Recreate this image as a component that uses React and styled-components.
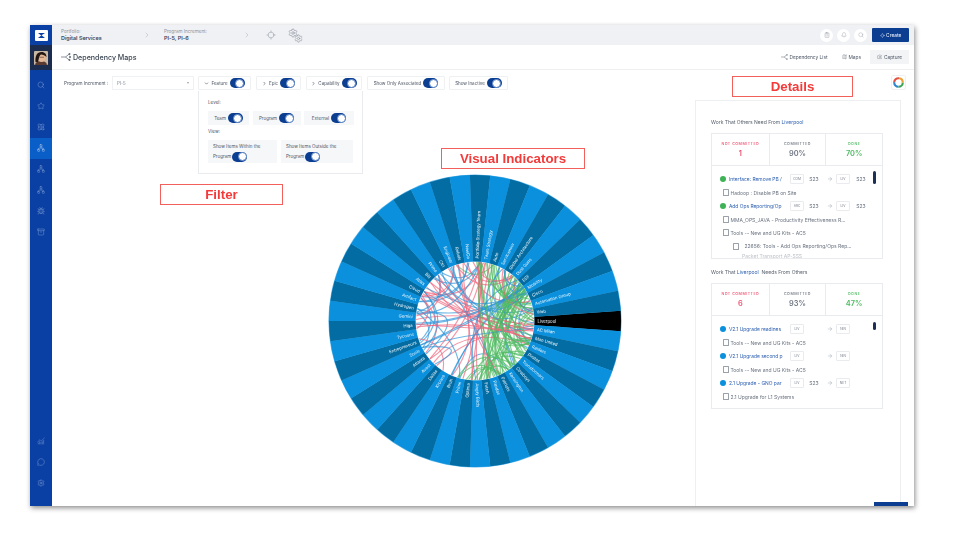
import React from 'react';
import styled, { createGlobalStyle } from 'styled-components';
import { Search, Star, Atom, Network, Bug, Archive, ChartNoAxesCombined, MessageCircle, Settings, ClipboardList, Bell, Locate, ChevronRight, ChevronDown, ArrowRight, Camera, Map as MapIcon } from 'lucide-react';

const Global = createGlobalStyle`
  html, body { margin: 0; padding: 0; background: #fff; overflow: hidden; }
  body { font-family: Inter, "Liberation Sans", sans-serif; color: #3d4654; }
`;
const Page = styled.div`
  position: relative; width: 960px; height: 540px; box-sizing: border-box; padding: 25px 0 0 30px;
`;
const Window = styled.div`
  position: relative; width: 884px; height: 481px; display: flex; overflow: hidden; background: #fff;
  box-shadow: 1px 2px 5px rgba(0,0,0,.45); filter: blur(.35px);
`;
const Sidebar = styled.nav`
  width: 22px; flex: none; background: #0a3fa3; display: flex; flex-direction: column; color: #7f9fd6;
`;
const LogoCell = styled.div`height: 20px; display: flex; align-items: center; justify-content: center;`;
const AvatarCell = styled.div`height: 25px; background: #1b2c4e; display: flex; align-items: center; justify-content: center; margin-bottom: 4.5px;`;
const NavItem = styled.div`
  height: 21px; flex: none; display: flex; align-items: center; justify-content: center;
  background: ${p => p.$active ? '#0a5ec8' : 'transparent'}; color: ${p => p.$active ? '#b9d2f3' : '#7f9fd6'};
`;
const NavBottom = styled.div`margin-top: auto; padding-bottom: 12.5px;`;
const Main = styled.div`flex: 1; min-width: 0; display: flex; flex-direction: column;`;
const TopBar = styled.header`height: 20px; flex: none; background: #f0f1f5; display: flex; align-items: center; padding: 0 5px 0 9px;`;
const Crumb = styled.div`width: ${p => p.$w}px; display: flex; flex-direction: column; gap: 1.5px;`;
const CrumbLabel = styled.span`font-size: 4.6px; color: #8a919c;`;
const CrumbValue = styled.span`font-size: 5.4px; font-weight: 600; color: #3c4656;`;
const ChevronBox = styled.span`width: 8px; margin-right: ${p => p.$mr}px; color: #9aa1ab; display: flex;`;
const GhostIcon = styled.span`color: #8d949e; display: flex; margin-right: ${p => p.$mr}px;`;
const GearStack = styled.span`position: relative; width: 15px; height: 15px; color: #8d949e; display: flex;`;
const GearSmall = styled.span`position: absolute; right: 0; bottom: 0; display: flex;`;
const TopRight = styled.div`margin-left: auto; display: flex; align-items: center; gap: 4px;`;
const Round = styled.span`width: 13px; height: 13px; border-radius: 50%; background: #fff; color: #8d949e; display: flex; align-items: center; justify-content: center;`;
const CreateBtn = styled.button`
  width: 37px; height: 14px; margin-left: 1px; border: 0; padding: 0; border-radius: 1px; background: #0b3d91; color: #dfe8f6;
  font: 500 4.8px Inter, sans-serif; display: flex; align-items: center; justify-content: center; gap: 1.5px;
`;
const HeaderRow = styled.div`height: 24px; flex: none; border-bottom: 1px solid #eef0f2; display: flex; align-items: center; padding: 0 5px 0 9px;`;
const PageTitle = styled.h1`margin: 0; font-size: 7.1px; font-weight: 500; color: #3a4452; display: flex; align-items: center; gap: 2px;`;
const HeaderActions = styled.div`margin-left: auto; display: flex; align-items: center;`;
const HeaderLink = styled.span`font-size: 4.8px; color: #4c5563; display: flex; align-items: center; gap: 1.5px; margin-right: ${p => p.$mr}px;`;
const CaptureBtn = styled.span`width: 39px; height: 14px; background: #f3f4f6; font-size: 4.8px; color: #4c5563; display: flex; align-items: center; justify-content: center; gap: 1.5px;`;
const Content = styled.div`flex: 1; min-height: 0; display: flex;`;
const LeftArea = styled.section`flex: 1; min-width: 0; padding: 6px 0 0 12px;`;
const FilterRow = styled.div`display: flex; align-items: center; height: 14px;`;
const FilterLabel = styled.span`font-size: 4.6px; color: #4c5563; width: 48px; flex: none; white-space: nowrap;`;
const SelectBox = styled.div`
  width: 82px; height: 14px; box-sizing: border-box; border: 1px solid #f0f1f3; font-size: 4.4px; color: #7b838f; padding: 0 4px;
  display: flex; align-items: center; justify-content: space-between; margin-right: 4px;
`;
const Caret = styled.span`width: 0; height: 0; border-left: 1.5px solid transparent; border-right: 1.5px solid transparent; border-top: 2px solid #9aa1ab;`;
const FilterItem = styled.div`position: relative; margin-right: ${p => p.$mr}px; flex: none;`;
const Chip = styled.div`
  width: ${p => p.$w}px; height: 14px; box-sizing: border-box; border: 1px solid #eff0f2; border-radius: 1px;
  display: flex; align-items: center; justify-content: center; gap: 2px; font-size: 4.5px; color: #4c5563; white-space: nowrap;
`;
const ToggleTrack = styled.span`
  display: inline-block; position: relative; width: 15px; height: 10px; border-radius: 5px; background: #0b3d91; flex: none; vertical-align: middle;
`;
const ToggleKnob = styled.span`
  position: absolute; right: .5px; top: .5px; width: 9px; height: 9px; box-sizing: border-box; border-radius: 50%; background: #fff; border: 1px solid #5a84c8;
`;
const Toggle = () => <ToggleTrack><ToggleKnob /></ToggleTrack>;
const Dropdown = styled.div`
  position: absolute; left: 0; top: 15px; width: 165px; height: 83px; box-sizing: border-box; background: #fff;
  border: 1px solid #e9ebee; border-top: 0; padding: 9px 8px 0 9px; z-index: 2;
`;
const DropLabel = styled.div`font-size: 4.6px; color: #4c5563; height: 6px; line-height: 6px;`;
const DropRow = styled.div`display: flex; gap: ${p => p.$gap}px; margin: 5px 0 4px;`;
const LevelChip = styled.div`
  width: ${p => p.$w}px; height: 14px; background: #f6f7f9; display: flex; align-items: center; justify-content: center; gap: 2px; font-size: 4.5px; color: #4c5563;
`;
const ViewChip = styled.div`
  width: ${p => p.$w}px; height: 23px; box-sizing: border-box; background: #f6f7f9; padding: 3px 5px; font-size: 4.5px; line-height: 8.5px; color: #4c5563;
`;
const ChordWrap = styled.div`width: 294px; height: 294px; margin: 84px 0 0 264px;`;
const ChordSvg = styled.svg`display: block; overflow: visible;`;
const Seg = styled.path`fill: ${p => p.$c};`;
const Label = styled.text`font-family: Inter, sans-serif; font-size: 4.3px; fill: #eaf5fc;`;
const Chord = styled.path`fill: none; stroke: ${p => p.$c}; stroke-width: 1.15; opacity: .68;`;
const DetailsCol = styled.aside`width: 206px; flex: none; margin-right: 13px; padding-top: 5px; display: flex; flex-direction: column;`;
const DonutRow = styled.div`height: 15px; margin: 0 -5px 10px 0; display: flex; justify-content: flex-end;`;
const DonutBtn = styled.span`width: 15px; height: 15px; border: 1px solid #eef0f2; border-radius: 2px; box-sizing: border-box; display: flex; align-items: center; justify-content: center;`;
const Panel = styled.div`flex: 1; border: 1px solid #eeeff1; border-bottom: 0; padding: 16px 17px 0 15px; box-sizing: border-box;`;
const PanelTitle = styled.div`font-size: 5px; line-height: 10px; color: #59616d; margin: ${p => p.$mt}px 0 6px; white-space: pre;`;
const TeamLink = styled.span`color: #2a5db0;`;
const Box = styled.div`border: 1px solid #e9ebee; box-sizing: border-box; width: 172px;`;
const Stats = styled.div`height: 32px; display: grid; grid-template-columns: repeat(3, 1fr); border-bottom: 1px solid #e9ebee; box-sizing: border-box;`;
const Stat = styled.div`
  display: flex; flex-direction: column; align-items: center; padding-top: 7px; gap: 3px; box-sizing: border-box;
  & + & { border-left: 1px solid #e9ebee; }
`;
const StatLabel = styled.span`font-size: 3.7px; letter-spacing: .45px; font-weight: 500; color: ${p => p.$c};`;
const StatValue = styled.span`font-size: 7.4px; font-weight: 600; color: ${p => p.$c};`;
const ItemList = styled.div`position: relative; height: 92px; overflow: hidden; padding: 6px 0 0 8px; box-sizing: border-box;`;
const Thumb = styled.span`position: absolute; left: 161px; top: ${p => p.$t}px; width: 3px; height: ${p => p.$h}px; border-radius: 1.5px; background: #1d2f55;`;
const MainRow = styled.div`height: 14px; display: flex; align-items: center; font-size: 5px; color: #6b7380;`;
const Dot = styled.span`width: 6px; height: 6px; border-radius: 50%; background: ${p => p.$c}; flex: none; margin-right: 3px;`;
const ItemTitle = styled.span`width: 57px; flex: none; white-space: nowrap; font-size: 4.9px; color: #2a5db0; font-weight: 400; margin-right: 4px;`;
const Code = styled.span`
  width: 14px; height: 10px; flex: none; box-sizing: border-box; border: 1px solid #e9ebee; border-radius: 1px; font-size: 3.2px; color: #737b87;
  display: flex; align-items: center; justify-content: center;
`;
const Sprint = styled.span`width: ${p => p.$w}px; flex: none; text-align: center;`;
const ArrowBox = styled.span`width: 12px; flex: none; color: #8a919c; display: flex; justify-content: center;`;
const SubRow = styled.div`
  height: ${p => p.$h || 13}px; display: flex; align-items: center; gap: 1.5px; font-size: 5px; color: #6b7380; white-space: nowrap;
  padding-left: ${p => p.$indent || 3}px; opacity: ${p => p.$fade ? .45 : 1};
`;
const DocIcon = styled.span`width: 4px; height: 5px; flex: none; border: .7px solid #9aa1ab; border-radius: .6px; margin-right: ${p => p.$mr || 0}px;`;
const PeekButton = styled.span`position: absolute; left: 844px; bottom: 0; width: 34px; height: 4px; background: #0b3d91;`;
const Annotation = styled.div`
  position: absolute; left: ${p => p.$x}px; top: ${p => p.$y}px; width: ${p => p.$w}px; height: 21px; box-sizing: border-box; z-index: 5; background: #fff;
  border: 1.5px solid #f3605c; color: #f33b3a; font: 700 13.3px "Liberation Sans", Arial, sans-serif; display: flex; align-items: center; justify-content: center; filter: blur(.25px);
`;

const LABELS = ['Liverpool','AC Milan','Man United','Raiders','Pirates','Transformers','Cowboys','Kensington','Patriots','Pandas','Fetch','Angry Birds','Optima','Prime','Bruh','Kronos','Dallas','Avast','Atlanta','Sonic','Entrepreneurs','Tycoons','Higa','Gemini','Hydrogen','Artifact','Cloud','Atlas','Bill','Prime','Ctrl','Engineer','Rebels','NewCo','Portfolio Strategy Team','Team Strategy','Auto','Servicenow','Global Architecture','Dust Guns','ESF','Mobility','Cisco','Automation Group','Web'];
const STEP = 360 / 45;
const CX = 147, CY = 147, R0 = 59.5, R1 = 146;
const pt = (deg, r) => [CX + r * Math.cos(deg * Math.PI / 180), CY + r * Math.sin(deg * Math.PI / 180)];
const fmt = n => n.toFixed(2);
const wedge = i => {
  const a = (i - .5) * STEP, b = (i + .5) * STEP;
  const [x1, y1] = pt(a, R0), [x2, y2] = pt(a, R1), [x3, y3] = pt(b, R1), [x4, y4] = pt(b, R0);
  return `M${fmt(x1)} ${fmt(y1)}L${fmt(x2)} ${fmt(y2)}A${R1} ${R1} 0 0 1 ${fmt(x3)} ${fmt(y3)}L${fmt(x4)} ${fmt(y4)}A${R0} ${R0} 0 0 0 ${fmt(x1)} ${fmt(y1)}Z`;
};
function rng(seed) {
  return () => {
    seed |= 0; seed = seed + 0x6D2B79F5 | 0;
    let t = Math.imul(seed ^ seed >>> 15, 1 | seed);
    t = t + Math.imul(t ^ t >>> 7, 61 | t) ^ t;
    return ((t ^ t >>> 14) >>> 0) / 4294967296;
  };
}
function buildChords() {
  const r = rng(7), out = [];
  const range = (a, b) => (a + r() * (b - a)) * STEP;
  const long = (c, a0, a1, b0, b1, n, ox, oy, spread) => {
    for (let k = 0; k < n; k++) {
      const [x1, y1] = pt(range(a0, a1), 59), [x2, y2] = pt(range(b0, b1), 59);
      out.push({ c, d: `M${fmt(x1)} ${fmt(y1)}Q${fmt(CX + ox + (r() - .5) * spread)} ${fmt(CY + oy + (r() - .5) * spread)} ${fmt(x2)} ${fmt(y2)}` });
    }
  };
  const short = (c, a0, a1, n, span) => {
    for (let k = 0; k < n; k++) {
      const a = range(a0, a1), b = a + (span * .5 + r() * span) * STEP;
      const [x1, y1] = pt(a, 59), [x2, y2] = pt(b, 59), [qx, qy] = pt((a + b) / 2, 59 - Math.abs(b - a) * .6);
      out.push({ c, d: `M${fmt(x1)} ${fmt(y1)}Q${fmt(qx)} ${fmt(qy)} ${fmt(x2)} ${fmt(y2)}` });
    }
  };
  const BLUE = '#2b93d8', RED = '#f0647c', GREEN = '#4fbb62';
  long(BLUE, 0, 45, 0, 45, 20, 0, 0, 50);
  long(BLUE, 40, 41, 14, 24, 7, 0, 0, 4);
  short(BLUE, 17, 30, 9, 5);
  short(BLUE, 36, 44, 4, 4);
  long(RED, -1, 3, 16, 30, 12, 0, 6, 36);
  long(RED, 30, 36, 4, 18, 9, 0, 0, 30);
  short(RED, 24, 40, 9, 7);
  short(RED, 12, 24, 4, 5);
  long(GREEN, 33, 42, 2, 11, 30, 14, 16, 44);
  long(GREEN, 40, 41, 6, 13, 7, 8, 10, 12);
  short(GREEN, 30, 40, 12, 6);
  short(GREEN, 40, 45, 5, 5);
  short(GREEN, 2, 10, 12, 5);
  return out;
}
const CHORDS = buildChords().map((c, i) => ({ ...c, i })).sort((a, b) => ((a.i * 37) % 17) - ((b.i * 37) % 17));

function ChordDiagram() {
  return (
    <ChordSvg width="294" height="294" viewBox="0 0 294 294">
      <circle cx={CX} cy={CY} r={R1 + .6} fill="#5bb5ea" />
      <circle cx={CX} cy={CY} r={R0} fill="#fff" />
      {LABELS.map((_, i) => <Seg key={i} d={wedge(i)} $c={i === 0 ? '#000' : i % 2 ? '#0a90dc' : '#036ca2'} />)}
      {CHORDS.map(c => <Chord key={c.i} d={c.d} $c={c.c} />)}
      {LABELS.map((t, i) => {
        const a = i * STEP, left = a > 90 && a < 270;
        return (
          <Label key={i} transform={`translate(${CX} ${CY}) rotate(${left ? a + 180 : a}) translate(${left ? -62.5 : 62.5} 1.5)`} textAnchor={left ? 'end' : 'start'}>{t}</Label>
        );
      })}
    </ChordSvg>
  );
}

const Logo = () => (
  <svg width="13" height="11" viewBox="0 0 13 11"><path d="M1 0h11a1 1 0 0 1 1 1v9a1 1 0 0 1-1 1H1a1 1 0 0 1-1-1V1a1 1 0 0 1 1-1z" fill="#fff" /><path d="M3 3h7L6.5 5.2 10 8H3l3.2-2.6z" fill="#0a3fa3" /></svg>
);
const Avatar = () => (
  <svg width="14" height="14" viewBox="0 0 14 14">
    <rect width="14" height="14" rx="1" fill="#c9b7a4" />
    <path d="M1 14c.5-3 2.500-4 6-4s5.500 1 6 4z" fill="#5a3a30" />
    <ellipse cx="7.500" cy="6.500" rx="3.600" ry="4.500" fill="#e6b796" />
    <path d="M1.500 11C1 5 3 1 7.500 1c3.500 0 5 2.500 5 5-1.500-1.500-3.500-2.500-5.500-2.500C5 4.500 5 8 4 11z" fill="#241612" />
    <rect x="5.500" y="5.800" width="4.500" height=".8" fill="#3b2a24" opacity=".7" />
  </svg>
);
const MapGlyph = () => (
  <svg width="10" height="8" viewBox="0 0 10 8" fill="none" stroke="#5a6472" strokeWidth=".7"><path d="M0 4h4.500L8 1.200M4.500 4L8 6.800" /><circle cx="8.500" cy="1" r=".7" fill="#5a6472" /><circle cx="9" cy="4" r=".7" fill="#5a6472" /><circle cx="8.500" cy="7" r=".7" fill="#5a6472" /></svg>
);
const SmallMapGlyph = () => (
  <svg width="7" height="6" viewBox="0 0 10 8" fill="none" stroke="#6b7380" strokeWidth=".8"><path d="M0 4h4.500L8 1.200M4.500 4L8 6.800" /><circle cx="8.500" cy="1" r=".8" /><circle cx="8.500" cy="7" r=".8" /></svg>
);
const Donut = () => (
  <svg width="11" height="11" viewBox="0 0 36 36" fill="none" strokeWidth="7">
    <circle cx="18" cy="18" r="14" stroke="#3aa655" strokeDasharray="22 66" strokeDashoffset="0" />
    <circle cx="18" cy="18" r="14" stroke="#2a86d0" strokeDasharray="22 66" strokeDashoffset="-22" />
    <circle cx="18" cy="18" r="14" stroke="#e0503f" strokeDasharray="22 66" strokeDashoffset="-44" />
    <circle cx="18" cy="18" r="14" stroke="#f0a030" strokeDasharray="22 66" strokeDashoffset="-66" />
  </svg>
);

const SIDE = [Search, Star, Atom, Network, Network, Network, Bug, Archive];
const SIDE_BOTTOM = [ChartNoAxesCombined, MessageCircle, Settings];

const LIST_A = [
  { k: 'm', title: 'Interface: Remove PB /', from: 'COM', s1: 'S23', to: 'LIV', s2: 'S23', c: '#3fb257' },
  { k: 's', text: 'Hadoop : Disable PB on Site' },
  { k: 'm', title: 'Add Ops Reporting/Op', from: 'ARC', s1: 'S23', to: 'LIV', s2: 'S23', c: '#3fb257' },
  { k: 's', text: 'MMA_OPS_JAVA - Productivity Effectiveness R...' },
  { k: 's', text: 'Tools -- New and UG Kits - AC5' },
  { k: 'i', text: '22656: Tools - Add Ops Reporting/Ops Rep...' },
  { k: 'f', text: 'Packet Transport AP-SSS' },
];
const LIST_B = [
  { k: 'm', title: 'V2.1 Upgrade readines', from: 'LIV', to: 'NIN', c: '#0a90dc' },
  { k: 's', text: 'Tools -- New and UG Kits - AC5' },
  { k: 'm', title: 'V2.1 Upgrade second p', from: 'LIV', to: 'NIN', c: '#0a90dc' },
  { k: 's', text: 'Tools -- New and UG Kits - AC5' },
  { k: 'm', title: '2.1 Upgrade - GNO par', from: 'LIV', s1: 'S23', to: 'NET', c: '#0a90dc' },
  { k: 's', text: '2.1 Upgrade for L1 Systems' },
];

function Items({ rows }) {
  return rows.map((r, i) => {
    if (r.k === 'm') return (
      <MainRow key={i}>
        <Dot $c={r.c} />
        <ItemTitle>{r.title}</ItemTitle>
        <Code>{r.from}</Code>
        <Sprint $w={20}>{r.s1}</Sprint>
        <ArrowBox><ArrowRight size={6} strokeWidth={1.5} /></ArrowBox>
        <Code>{r.to}</Code>
        <Sprint $w={22}>{r.s2}</Sprint>
      </MainRow>
    );
    if (r.k === 'i') return <SubRow key={i} $h={14} $indent={13}><DocIcon $mr={4} />{r.text}</SubRow>;
    if (r.k === 'f') return <SubRow key={i} $h={6} $indent={22} $fade>{r.text}</SubRow>;
    return <SubRow key={i}><DocIcon />{r.text}</SubRow>;
  });
}

function Summary({ title, stats, rows, thumb }) {
  return (
    <>
      {title}
      <Box>
        <Stats>
          <Stat><StatLabel $c="#f0506e">NOT COMMITTED</StatLabel><StatValue $c="#f0506e">{stats[0]}</StatValue></Stat>
          <Stat><StatLabel $c="#6f7682">COMMITTED</StatLabel><StatValue $c="#6f7682">{stats[1]}</StatValue></Stat>
          <Stat><StatLabel $c="#4cbb5f">DONE</StatLabel><StatValue $c="#4cbb5f">{stats[2]}</StatValue></Stat>
        </Stats>
        <ItemList>
          <Items rows={rows} />
          <Thumb $t={thumb[0]} $h={thumb[1]} />
        </ItemList>
      </Box>
    </>
  );
}

export default function App() {
  return (
    <Page>
      <Global />
      <Window>
        <Sidebar>
          <LogoCell><Logo /></LogoCell>
          <AvatarCell><Avatar /></AvatarCell>
          {SIDE.map((I, i) => <NavItem key={i} $active={i === 3}><I size={8} strokeWidth={1.4} /></NavItem>)}
          <NavBottom>
            {SIDE_BOTTOM.map((I, i) => <NavItem key={i}><I size={8} strokeWidth={1.4} /></NavItem>)}
          </NavBottom>
        </Sidebar>
        <Main>
          <TopBar>
            <Crumb $w={82}><CrumbLabel>Portfolio:</CrumbLabel><CrumbValue>Digital Services</CrumbValue></Crumb>
            <ChevronBox $mr={13}><ChevronRight size={8} strokeWidth={1.2} /></ChevronBox>
            <Crumb $w={79}><CrumbLabel>Program Increment:</CrumbLabel><CrumbValue>PI-5, PI-6</CrumbValue></Crumb>
            <ChevronBox $mr={15}><ChevronRight size={8} strokeWidth={1.2} /></ChevronBox>
            <GhostIcon $mr={12}><Locate size={10} strokeWidth={1.2} /></GhostIcon>
            <GearStack><Settings size={10} strokeWidth={1.6} /><GearSmall><Settings size={9} strokeWidth={1.6} /></GearSmall></GearStack>
            <TopRight>
              <Round><ClipboardList size={6} strokeWidth={1.5} /></Round>
              <Round><Bell size={6} strokeWidth={1.4} /></Round>
              <Round><Search size={6} strokeWidth={1.4} /></Round>
              <CreateBtn><Locate size={5} strokeWidth={1.5} />Create</CreateBtn>
            </TopRight>
          </TopBar>
          <HeaderRow>
            <PageTitle><MapGlyph />Dependency Maps</PageTitle>
            <HeaderActions>
              <HeaderLink $mr={14}><SmallMapGlyph />Dependency List</HeaderLink>
              <HeaderLink $mr={9}><MapIcon size={5.500} strokeWidth={1.3} />Maps</HeaderLink>
              <CaptureBtn><Camera size={5.500} strokeWidth={1.3} />Capture</CaptureBtn>
            </HeaderActions>
          </HeaderRow>
          <Content>
            <LeftArea>
              <FilterRow>
                <FilterLabel>Program Increment :</FilterLabel>
                <SelectBox>PI-5<Caret /></SelectBox>
                <FilterItem $mr={5}>
                  <Chip $w={53}><ChevronDown size={5} strokeWidth={3} />Feature<Toggle /></Chip>
                  <Dropdown>
                    <DropLabel>Level:</DropLabel>
                    <DropRow $gap={3.500}>
                      <LevelChip $w={41}>Team<Toggle /></LevelChip>
                      <LevelChip $w={48}>Program<Toggle /></LevelChip>
                      <LevelChip $w={50}>External<Toggle /></LevelChip>
                    </DropRow>
                    <DropLabel>View:</DropLabel>
                    <DropRow $gap={4}>
                      <ViewChip $w={69}>Show Items Within the<br />Program <Toggle /></ViewChip>
                      <ViewChip $w={72}>Show Items Outside the<br />Program <Toggle /></ViewChip>
                    </DropRow>
                  </Dropdown>
                </FilterItem>
                <FilterItem $mr={5}><Chip $w={45}><ChevronRight size={5} strokeWidth={3} />Epic<Toggle /></Chip></FilterItem>
                <FilterItem $mr={5}><Chip $w={56}><ChevronRight size={5} strokeWidth={3} />Capability<Toggle /></Chip></FilterItem>
                <FilterItem $mr={4}><Chip $w={78}>Show Only Associated<Toggle /></Chip></FilterItem>
                <FilterItem $mr={0}><Chip $w={59}>Show Inactive<Toggle /></Chip></FilterItem>
              </FilterRow>
              <ChordWrap><ChordDiagram /></ChordWrap>
            </LeftArea>
            <DetailsCol>
              <DonutRow><DonutBtn><Donut /></DonutBtn></DonutRow>
              <Panel>
                <Summary
                  title={<PanelTitle $mt={0}>Work That Others Need From <TeamLink>Liverpool</TeamLink></PanelTitle>}
                  stats={['1', '90%', '70%']} rows={LIST_A} thumb={[5, 13]}
                />
                <Summary
                  title={<PanelTitle $mt={8}>Work That <TeamLink>Liverpool</TeamLink>  Needs From Others</PanelTitle>}
                  stats={['6', '93%', '47%']} rows={LIST_B} thumb={[6, 8]}
                />
              </Panel>
            </DetailsCol>
          </Content>
        </Main>
        <PeekButton />
      </Window>
      <Annotation $x={160} $y={184} $w={123}>Filter</Annotation>
      <Annotation $x={441} $y={148} $w={144}>Visual Indicators</Annotation>
      <Annotation $x={732} $y={76} $w={121}>Details</Annotation>
    </Page>
  );
}
